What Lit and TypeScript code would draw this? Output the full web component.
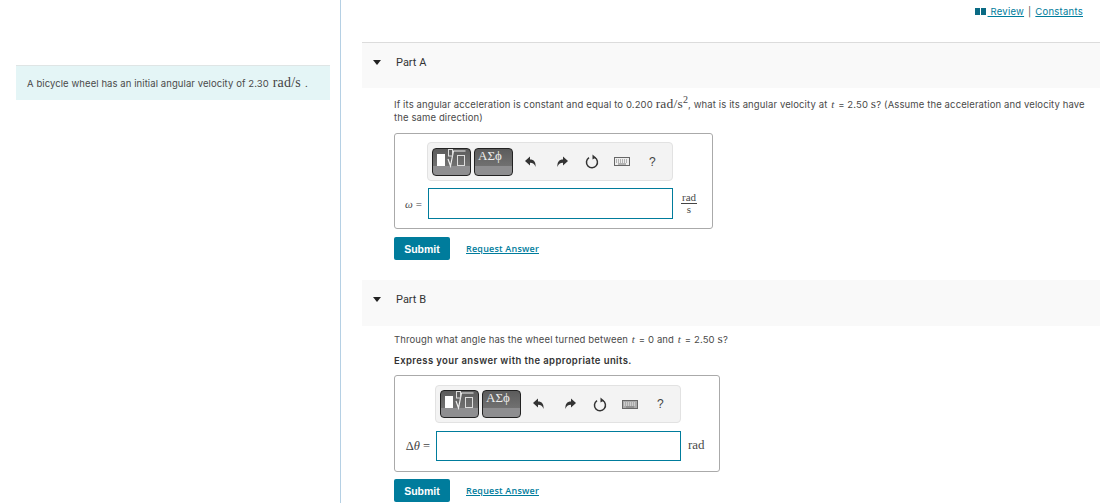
import { LitElement, html, css, svg } from "lit";
import { customElement } from "lit/decorators.js";

const undo = svg`<path d="M1 5 L6 0.5 V3.4 C10 3.4 12 6 11.5 11 C10.6 8 9 6.8 6 6.8 V9.6 Z" fill="#333"/>`;
const redo = svg`<path d="M12 5 L7 0.5 V3.4 C3 3.4 1 6 1.5 11 C2.4 8 4 6.8 7 6.8 V9.6 Z" fill="#333"/>`;

@customElement("app-root")
export class AppRoot extends LitElement {
  static styles = css`
    :host { display: block; width: 1100px; height: 503px; overflow: hidden; background: #fff; font-family: Inter, sans-serif; font-size: 9.5px; letter-spacing: .08px; color: #4a4a4a; }
    .page { display: grid; grid-template-columns: 341px 1fr; height: 503px; }
    .left { border-right: 1px solid #b5d0e4; padding: 65px 10px 0 16px; }
    .intro { height: 35px; box-sizing: border-box; background: #e4f5f6; border-top: 1px solid #dfe5e5; padding: 0 11px; display: flex; align-items: center; gap: 4px; white-space: nowrap; }
    .m { font-family: "Liberation Serif", serif; color: #444; letter-spacing: .2px; }
    .intro .m { font-size: 14px; }
    .right { padding-left: 21px; }
    .top { height: 42px; box-sizing: border-box; padding: 6px 17px 0 0; display: flex; justify-content: flex-end; align-items: flex-start; letter-spacing: .25px; }
    a { color: #007c9c; text-decoration: underline; }
    .top svg { margin-top: 2px; margin-right: 2px; }
    .sep { color: #555; margin: 0 1px; }
    .head { background: #f9f9f9; display: flex; align-items: flex-start; height: 46px; box-sizing: border-box; padding-top: 13px; }
    .head.a { border-top: 1px solid #dcdcdc; }
    .head.b { margin-top: 20px; }
    .tri { width: 0; height: 0; border-left: 4px solid transparent; border-right: 4px solid transparent; border-top: 5px solid #222; margin: 4px 0 0 11px; }
    .title { margin-left: 15px; font-family: Roboto, sans-serif; font-size: 11px; letter-spacing: 0; color: #333; line-height: 14px; }
    .body { padding-left: 32px; }
    .q { line-height: 13px; width: 700px; padding-top: 10px; height: 35px; white-space: normal; letter-spacing: .12px; }
    .q.one { padding-top: 7px; height: 13px; }
    .q .m { font-size: 13.5px; line-height: 10px; }
    .q i.t { font-family: "Liberation Serif", serif; font-size: 11px; margin: 0 1px; }
    .q sup { font-size: 10px; line-height: 0; }
    .strong { font-weight: 600; margin-top: 8px; line-height: 13px; letter-spacing: .4px; color: #333; }
    .box { box-sizing: border-box; border: 1px solid #aaa; border-radius: 3px; width: 319px; height: 96px; }
    .b2 { width: 326px; margin-top: 8px; height: 97px; }
    .tb { margin-left: 32px; width: 246px; height: 39px; box-sizing: border-box; background: #f3f3f3; border: 1px solid #e2e2e2; border-radius: 4px; margin-top: 8px; display: flex; align-items: center; padding-left: 4px; }
    .b2 .tb { margin-left: 40px; height: 38px; margin-top: 9px; }
    .btn { width: 39px; height: 28px; flex: none; box-sizing: border-box; border: 1px solid #222; border-radius: 4px; background: linear-gradient(#5c5c5c, #707070 64%, #8e8e90 64%); margin-right: 3px; color: #eee; position: relative; overflow: hidden; }
    .btn span { position: absolute; left: 3px; top: -1px; font-family: "Liberation Serif", serif; font-size: 13px; letter-spacing: 0; line-height: 16px; white-space: nowrap; }
    .ic { display: block; position: absolute; }
    .icons { display: flex; align-items: center; margin-left: 8px; height: 100%; }
    .icons > * { flex: none; }
    .redo { margin-left: 19px; }
    .refresh { margin-left: 16px; }
    .kbd { margin-left: 15px; }
    .q-mark { font-family: "Liberation Sans", sans-serif; font-size: 12px; color: #444; margin-left: 19px; }
    .row { display: flex; align-items: center; margin-top: 7px; }
    .b2 .row { margin-top: 8px; }
    .lab { width: 33px; text-align: right; padding-right: 6px; box-sizing: border-box; font-family: "Liberation Serif", serif; font-size: 11px; color: #444; }
    .b2 .lab { width: 41px; font-size: 12.5px; letter-spacing: 0; }
    .inp { width: 245px; height: 31px; box-sizing: border-box; border: 1px solid #007c9c; background: #fff; }
    .b2 .inp { height: 30px; }
    .unit { margin-left: 8px; font-family: "Liberation Serif", serif; font-size: 11px; letter-spacing: 0; display: flex; flex-direction: column; align-items: center; line-height: 11px; }
    .unit b { font-weight: 400; border-top: 1px solid #444; padding: 0 1px; width: 14px; text-align: center; }
    .unit2 { margin-left: 7px; font-family: "Liberation Serif", serif; font-size: 13px; letter-spacing: 0; position: relative; top: -1px; }
    .actions { display: flex; align-items: center; margin-top: 8px; gap: 16px; height: 23px; }
    .submit { width: 56px; height: 23px; background: #007c9c; color: #fff; font-family: "Liberation Sans", sans-serif; font-weight: 700; font-size: 10.5px; letter-spacing: 0; border-radius: 2px; display: flex; align-items: center; justify-content: center; }
    .actions a { font-family: "Open Sans", sans-serif; font-size: 9px; font-weight: 600; letter-spacing: .2px; }
    .last { margin-top: 7px; }
  `;

  private tools(kbdDim = false) {
    return html`
      <div class="btn">
        <svg class="ic" width="37" height="26" viewBox="0 0 37 26">
          <rect x="4" y="5" width="8" height="12" fill="#fff"/>
          <path d="M15 10 l2.500 7 l3 -15 h12" fill="none" stroke="#eee" stroke-width="1.200"/>
          <rect x="15.500" y="0.500" width="4" height="6.500" fill="none" stroke="#ddd"/>
          <rect x="24.500" y="6.500" width="7" height="10" fill="none" stroke="#ddd"/>
        </svg>
      </div>
      <div class="btn"><span>ΑΣϕ</span></div>
      <div class="icons">
        <svg width="13" height="12" viewBox="0 0 13 12">${undo}</svg>
        <svg class="redo" width="13" height="12" viewBox="0 0 13 12">${redo}</svg>
        <svg class="refresh" width="14" height="15" viewBox="0 0 14 15"><path d="M9.6 3.400 A5.500 5.500 0 1 1 4 3.600" fill="none" stroke="#333" stroke-width="1.500"/><path d="M7.500 0.500 L11 3.500 L7.500 5.500 Z" fill="#333"/></svg>
        <svg class="kbd" width="16" height="9" viewBox="0 0 16 9"><rect x=".5" y=".5" width="15" height="8" fill="${kbdDim ? "#aaa" : "#eee"}" stroke="#666"/><path d="M2 3h12M2 5h12" stroke="${kbdDim ? "#eee" : "#777"}" stroke-dasharray="1 1"/><path d="M4 7h8" stroke="#777"/></svg>
        <span class="q-mark">?</span>
      </div>`;
  }

  render() {
    return html`<div class="page">
      <div class="left">
        <div class="intro"><span>A bicycle wheel has an initial angular velocity of 2.30</span><span class="m">rad/s</span><span>.</span></div>
      </div>
      <div class="right">
        <div class="top">
          <svg width="11" height="7" viewBox="0 0 11 7"><path d="M0 0h5v7H0zM6 0h5v7H6z" fill="#0a6a84"/></svg>
          <a href="#">&nbsp;Review</a><span class="sep">&nbsp;|&nbsp;</span><a href="#">Constants</a>
        </div>
        <div class="head a"><span class="tri"></span><span class="title">Part A</span></div>
        <div class="body">
          <div class="q">If its angular acceleration is constant and equal to 0.200 <span class="m">rad/s<sup>2</sup></span>, what is its angular velocity at <i class="t">t</i> = 2.50 <span class="m">s</span>? (Assume the acceleration and velocity have the same direction)</div>
          <div class="box">
            <div class="tb">${this.tools()}</div>
            <div class="row"><span class="lab"><i>ω</i> =</span><div class="inp"></div><div class="unit"><span>rad</span><b>s</b></div></div>
          </div>
          <div class="actions"><div class="submit">Submit</div><a href="#">Request Answer</a></div>
        </div>
        <div class="head b"><span class="tri"></span><span class="title">Part B</span></div>
        <div class="body">
          <div class="q one">Through what angle has the wheel turned between <i class="t">t</i> = 0 and <i class="t">t</i> = 2.50 <span class="m">s</span>?</div>
          <div class="strong">Express your answer with the appropriate units.</div>
          <div class="box b2">
            <div class="tb">${this.tools(true)}</div>
            <div class="row"><span class="lab">Δ<i>θ</i> =</span><div class="inp"></div><div class="unit2">rad</div></div>
          </div>
          <div class="actions last"><div class="submit">Submit</div><a href="#">Request Answer</a></div>
        </div>
      </div>
    </div>`;
  }
}
